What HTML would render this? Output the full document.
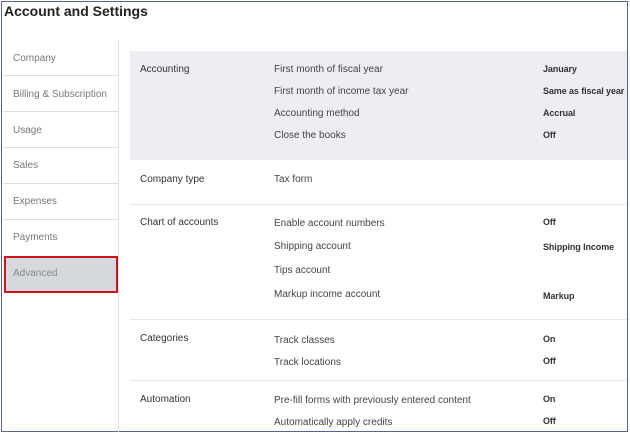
<!DOCTYPE html>
<html><head><meta charset="utf-8"><style>
*{margin:0;padding:0;box-sizing:border-box}
body{width:630px;height:433px;background:#fff;font-family:"Liberation Sans",sans-serif;position:relative;overflow:hidden;color:#444}
.frame{position:absolute;left:1px;top:1px;width:627px;height:431px;border:1px solid #56648f}
.t{position:absolute;font-size:10px;white-space:nowrap;margin-top:1px}
.title{position:absolute;left:4px;top:3px;font-size:14px;font-weight:bold;color:#222}
.vline{position:absolute;left:118px;top:40px;width:1px;height:392px;background:#e3e3e3}
.sl{position:absolute;left:3px;width:115px;height:1px;background:#ddd}
.hl{position:absolute;left:130px;width:497px;height:1px;background:#e6e6e6}
.side{position:absolute;left:13px;font-size:10px;color:#777;margin-top:1px}
.v{position:absolute;left:543px;font-size:9px;font-weight:bold;color:#333;white-space:nowrap;letter-spacing:-0.1px}
.lab{position:absolute;left:140px;font-size:10px;color:#333;margin-top:1px}
</style></head><body>
<div class="frame"></div>
<div class="title">Account and Settings</div>
<div class="vline"></div>
<div class="side" style="top:52px">Company</div>
<div class="sl" style="top:75px"></div>
<div class="side" style="top:88px">Billing &amp; Subscription</div>
<div class="sl" style="top:111px"></div>
<div class="side" style="top:124px">Usage</div>
<div class="sl" style="top:147px"></div>
<div class="side" style="top:159px">Sales</div>
<div class="sl" style="top:183px"></div>
<div class="side" style="top:195px">Expenses</div>
<div class="sl" style="top:219px"></div>
<div class="side" style="top:231px">Payments</div>
<div style="position:absolute;left:4px;top:256px;width:114px;height:37px;background:#d5d8dc;border:2px solid #d0121b"></div>
<div class="side" style="top:267px;color:#888">Advanced</div>
<div style="position:absolute;left:130px;top:51px;width:497px;height:109px;background:#eceef2"></div>
<div class="lab" style="top:63px">Accounting</div>
<div class="t" style="left:274px;top:63px">First month of fiscal year</div>
<div class="t" style="left:274px;top:85px">First month of income tax year</div>
<div class="t" style="left:274px;top:107px">Accounting method</div>
<div class="t" style="left:274px;top:129px">Close the books</div>
<div class="v" style="top:64px">January</div>
<div class="v" style="top:86px">Same as fiscal year</div>
<div class="v" style="top:108px">Accrual</div>
<div class="v" style="top:130px">Off</div>
<div class="lab" style="top:173px">Company type</div>
<div class="t" style="left:274px;top:173px">Tax form</div>
<div class="hl" style="top:204px"></div>
<div class="lab" style="top:216px">Chart of accounts</div>
<div class="t" style="left:274px;top:217px">Enable account numbers</div>
<div class="t" style="left:274px;top:240px">Shipping account</div>
<div class="t" style="left:274px;top:264px">Tips account</div>
<div class="t" style="left:274px;top:288px">Markup income account</div>
<div class="v" style="top:217px">Off</div>
<div class="v" style="top:242px">Shipping Income</div>
<div class="v" style="top:291px">Markup</div>
<div class="hl" style="top:319px"></div>
<div class="lab" style="top:332px">Categories</div>
<div class="t" style="left:274px;top:334px">Track classes</div>
<div class="t" style="left:274px;top:356px">Track locations</div>
<div class="v" style="top:334px">On</div>
<div class="v" style="top:356px">Off</div>
<div class="hl" style="top:380px"></div>
<div class="lab" style="top:393px">Automation</div>
<div class="t" style="left:274px;top:394px">Pre-fill forms with previously entered content</div>
<div class="t" style="left:274px;top:416px">Automatically apply credits</div>
<div class="v" style="top:394px">On</div>
<div class="v" style="top:416px">Off</div>
</body></html>
